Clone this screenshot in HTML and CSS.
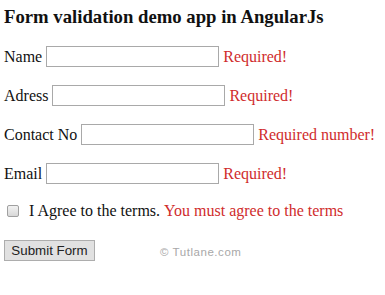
FILE: index.html
```html
<!DOCTYPE html>
<html>
<head>
<meta charset="utf-8">
<link rel="stylesheet" href="styles.css">
</head>
<body>
<h3 class="title">Form validation demo app in AngularJs</h3>
<form class="form">
  <div class="row"><label class="label">Name</label><input class="field" type="text"><span class="err">Required!</span></div>
  <div class="row"><label class="label">Adress</label><input class="field" type="text"><span class="err">Required!</span></div>
  <div class="row"><label class="label">Contact No</label><input class="field" type="text"><span class="err">Required number!</span></div>
  <div class="row"><label class="label">Email</label><input class="field" type="text"><span class="err">Required!</span></div>
  <div class="row check-row"><input class="check" type="checkbox"><span class="label">I Agree to the terms.</span><span class="err">You must agree to the terms</span></div>
  <div class="row btn-row"><button class="submit" type="button">Submit Form</button><span class="mark">© Tutlane.com</span></div>
</form>
</body>
</html>
```
FILE: styles.css
```css
html, body {
  background: #fff;
}
body {
  margin: 0;
  padding: 0 4px;
  font-family: "Liberation Serif", "Times New Roman", serif;
  font-size: 16px;
  color: #111;
}
.title {
  margin: 6px 0 0;
  font-size: 18.72px;
  font-weight: bold;
  line-height: 21px;
  color: #111;
}
.form {
  display: flex;
  flex-direction: column;
  margin-top: 19px;
}
.row {
  display: flex;
  align-items: center;
  height: 21px;
  margin-bottom: 18px;
}
.label {
  margin-right: 4px;
}
.field {
  box-sizing: border-box;
  width: 173px;
  height: 21px;
  margin: 0 4px 0 0;
  padding: 1px 2px;
  border: 1px solid #a9a9a9;
  background: #fff;
  font: 13px "Liberation Sans", Arial, sans-serif;
}
.err {
  color: #d02c2c;
}
.check-row {
  margin-top: -2px;
  margin-bottom: 19px;
}
.check {
  -webkit-appearance: none;
  appearance: none;
  box-sizing: border-box;
  width: 12px;
  height: 12px;
  margin: 0 10px 0 3px;
  border: 1px solid #a0a0a0;
  border-radius: 2px;
  background: linear-gradient(#f2f2f2, #d8d8d8);
}
.btn-row {
  margin: 0;
}
.submit {
  box-sizing: border-box;
  width: 91px;
  height: 21px;
  padding: 0;
  border: 1px solid #adadad;
  border-radius: 0;
  background: #e1e1e1;
  font: 13.33px "Liberation Sans", Arial, sans-serif;
  color: #222;
}
.mark {
  margin-left: 65px;
  margin-top: 3px;
  font: 11.5px "Liberation Sans", Arial, sans-serif;
  letter-spacing: 0.55px;
  color: #a8a8a8;
}
```
